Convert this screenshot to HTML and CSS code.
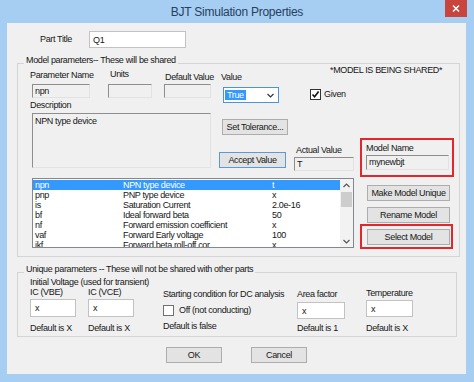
FILE: index.html
```html
<!DOCTYPE html>
<html lang="en">
<head>
    <meta charset="UTF-8">
    <meta name="viewport" content="width=device-width, initial-scale=1.0">
    <title>BJT Simulation Properties</title>
    <link rel="stylesheet" href="styles.css">
</head>
<body>
    <div class="window">
        <div class="titlebar">
            <span></span>
            <div class="title">BJT Simulation Properties</div>
            <button class="close-btn" aria-label="Close">
                <svg width="8" height="7" viewBox="0 0 8 7"><path d="M1 0.5L7 6.5M7 0.5L1 6.5" stroke="#fff" stroke-width="1.5"/></svg>
            </button>
        </div>

        <div class="client">
            <div class="part-row">
                <span class="part-label">Part Title</span>
                <input class="txt part-input" type="text" value="Q1">
            </div>

            <fieldset class="group model-group">
                <legend>Model parameters-- These will be shared</legend>

                <div class="row-top">
                    <div class="fld f-name">
                        <span class="lbl">Parameter Name</span>
                        <div class="ro">npn</div>
                    </div>
                    <div class="fld f-units">
                        <span class="lbl">Units</span>
                        <div class="ro"></div>
                    </div>
                    <div class="fld f-default">
                        <span class="lbl">Default Value</span>
                        <div class="ro"></div>
                    </div>
                    <div class="fld f-value">
                        <span class="lbl">Value</span>
                        <div class="dropdown">
                            <span class="sel">True</span>
                            <svg class="chev" width="7" height="5" viewBox="0 0 7 5"><path d="M0.5 1L3.5 4L6.5 1" fill="none" stroke="#333" stroke-width="1.2"/></svg>
                        </div>
                    </div>
                    <div class="shared-col">
                        <div class="shared-text">*MODEL IS BEING SHARED*</div>
                        <div class="check-row">
                            <span class="check checked">
                                <svg width="9" height="9" viewBox="0 0 9 9"><path d="M1.5 4.5L3.6 6.8L7.6 1.6" fill="none" stroke="#111" stroke-width="1.6"/></svg>
                            </span>
                            <span>Given</span>
                        </div>
                    </div>
                </div>

                <div class="row-mid">
                    <div class="desc-col">
                        <span class="lbl">Description</span>
                        <div class="ro desc-box">NPN type device</div>
                    </div>
                    <div class="btn-col">
                        <button class="btn btn-tol">Set Tolerance...</button>
                        <button class="btn btn-accept">Accept Value</button>
                    </div>
                    <div class="actual-col">
                        <span class="lbl">Actual Value</span>
                        <div class="ro">T</div>
                    </div>
                    <div class="model-box">
                        <span class="lbl">Model Name</span>
                        <div class="ro model-input">mynewbjt</div>
                    </div>
                </div>

                <div class="row-list">
                    <div class="list">
                        <div class="list-rows">
                            <div class="list-row selected"><span>npn</span><span>NPN type device</span><span>t</span></div>
                            <div class="list-row"><span>pnp</span><span>PNP type device</span><span>x</span></div>
                            <div class="list-row"><span>is</span><span>Saturation Current</span><span>2.0e-16</span></div>
                            <div class="list-row"><span>bf</span><span>Ideal forward beta</span><span>50</span></div>
                            <div class="list-row"><span>nf</span><span>Forward emission coefficient</span><span>x</span></div>
                            <div class="list-row"><span>vaf</span><span>Forward Early voltage</span><span>100</span></div>
                            <div class="list-row"><span>ikf</span><span>Forward beta roll-off cor</span><span>x</span></div>
                        </div>
                        <div class="scrollbar">
                            <div class="sb-arrow">
                                <svg width="7" height="5" viewBox="0 0 7 5"><path d="M0.5 4L3.5 1L6.5 4" fill="none" stroke="#555" stroke-width="1.2"/></svg>
                            </div>
                            <div class="sb-thumb"></div>
                            <div class="sb-track"></div>
                            <div class="sb-arrow">
                                <svg width="7" height="5" viewBox="0 0 7 5"><path d="M0.5 1L3.5 4L6.5 1" fill="none" stroke="#555" stroke-width="1.2"/></svg>
                            </div>
                        </div>
                    </div>
                    <div class="side-col">
                        <button class="btn side-btn btn-make">Make Model Unique</button>
                        <button class="btn side-btn btn-rename">Rename Model</button>
                        <div class="select-box">
                            <button class="btn side-btn">Select Model</button>
                        </div>
                    </div>
                </div>
            </fieldset>

            <fieldset class="group unique-group">
                <legend>Unique parameters -- These will not be shared with other parts</legend>

                <div class="row-unique">
                    <div class="u-col u-ic">
                        <div class="u-head">Initial Voltage (used for transient)</div>
                        <div class="ic-row">
                            <div class="ic-fld">
                                <span class="lbl">IC (VBE)</span>
                                <input class="txt ic-input" type="text" value="x">
                                <span class="def">Default is X</span>
                            </div>
                            <div class="ic-fld">
                                <span class="lbl">IC (VCE)</span>
                                <input class="txt ic-input" type="text" value="x">
                                <span class="def">Default is X</span>
                            </div>
                        </div>
                    </div>
                    <div class="u-col u-start">
                        <span class="lbl">Starting condition for DC analysis</span>
                        <div class="check-row off-row">
                            <span class="check"></span>
                            <span>Off (not conducting)</span>
                        </div>
                        <span class="def">Default is false</span>
                    </div>
                    <div class="u-col u-area">
                        <span class="lbl">Area factor</span>
                        <input class="txt u-input" type="text" value="x">
                        <span class="def">Default is 1</span>
                    </div>
                    <div class="u-col u-temp">
                        <span class="lbl">Temperature</span>
                        <input class="txt u-input" type="text" value="x">
                        <span class="def">Default is X</span>
                    </div>
                </div>
            </fieldset>

            <div class="dialog-buttons">
                <button class="btn dlg-btn">OK</button>
                <button class="btn dlg-btn">Cancel</button>
            </div>
        </div>
    </div>
</body>
</html>
```

FILE: styles.css
```css
* {
    box-sizing: border-box;
}
html, body {
    margin: 0;
}
body {
    background: #a5cef2;
    font-family: 'Liberation Sans', Arial, sans-serif;
    font-size: 9px;
    letter-spacing: -0.35px;
    line-height: 11px;
    color: #161616;
}
.window {
    width: 474px;
    height: 382px;
    display: flex;
    flex-direction: column;
}

/* title bar */
.titlebar {
    height: 23px;
    display: grid;
    grid-template-columns: 1fr auto 1fr;
}
.title {
    font-size: 12px;
    letter-spacing: -0.25px;
    line-height: 24px;
    color: #27405e;
}
.close-btn {
    justify-self: end;
    width: 22px;
    height: 17px;
    margin-right: 7px;
    padding: 0;
    border: 0;
    background: #c8443d;
    display: flex;
    align-items: center;
    justify-content: center;
}

/* client area */
.client {
    margin: 0 8px 0 7px;
    height: 351px;
    background: #f0f0f0;
    display: flex;
    flex-direction: column;
}
.part-row {
    display: flex;
    align-items: center;
    height: 17px;
    margin: 8px 0 0 33px;
}
.part-label {
    width: 49px;
}
.txt {
    font: inherit;
    letter-spacing: inherit;
    color: inherit;
    background: #fff;
    border: 1px solid #c2c2c2;
    padding: 0 3px;
    margin: 0;
    outline: none;
}
.part-input {
    width: 97px;
    height: 17px;
}
.ro {
    height: 14px;
    background: #f0f0f0;
    border: 1px solid;
    border-color: #8e8e8e #e2e2e2 #e2e2e2 #8e8e8e;
    padding: 0 2px;
    line-height: 12px;
}

/* group boxes */
.group {
    margin: 0;
    padding: 0;
    min-width: 0;
    border: 1px solid #d4d4d4;
}
.group legend {
    margin-left: 6px;
    padding: 0 2px 5px;
    line-height: 13px;
}
.model-group {
    width: 443px;
    margin: 6px 0 0 10px;
    padding-bottom: 7px;
}
.fld {
    display: flex;
    flex-direction: column;
}
.f-name {
    width: 58px;
    margin-left: 14px;
    padding-top: 5px;
}
.f-name .lbl {
    margin: 0 0 3px -2px;
    white-space: nowrap;
}
.f-units {
    width: 44px;
    margin-left: 18px;
    padding-top: 4px;
}
.f-units .lbl {
    margin: 0 0 4px 2px;
}
.f-default {
    width: 47px;
    margin-left: 12px;
    padding-top: 7px;
}
.f-default .lbl {
    margin: 0 0 1px 1px;
    white-space: nowrap;
}
.f-value {
    width: 58px;
    margin-left: 10px;
    padding-top: 7px;
}

.row-top {
    display: flex;
    align-items: flex-start;
    height: 38px;
    margin-top: -7px;
}
.dropdown {
    width: 56px;
    height: 16px;
    margin: 4px 0 0 2px;
    background: #fff;
    border: 1px solid #4d93da;
    display: flex;
    align-items: center;
    padding: 0 4px 0 1px;
}
.dropdown .sel {
    background: #3399ff;
    color: #fff;
    padding: 0 2px;
    line-height: 10px;
}
.dropdown .chev {
    margin-left: auto;
}
.shared-col {
    margin-left: 31px;
}
.shared-text {
    margin-left: 20px;
    white-space: nowrap;
}
.check-row {
    display: flex;
    align-items: center;
    gap: 3px;
    margin-top: 13px;
}
.check {
    width: 11px;
    height: 11px;
    background: #fff;
    border: 1px solid #707070;
    display: flex;
    align-items: center;
    justify-content: center;
}
.check.checked {
    border-color: #333;
}

.row-mid {
    display: flex;
    align-items: flex-start;
    margin-top: -3px;
}
.desc-col {
    width: 179px;
    margin-left: 14px;
    display: flex;
    flex-direction: column;
}
.desc-col .lbl {
    margin: 0 0 2px -2px;
}
.desc-box {
    height: 55px;
    padding-top: 1px;
}
.btn {
    font: inherit;
    letter-spacing: inherit;
    color: #161616;
    background: #e3e3e3;
    border: 1px solid #adadad;
    padding: 0;
    margin: 0;
    height: 16px;
    line-height: 14px;
    text-align: center;
}
.btn-col {
    width: 71px;
    margin-left: 8px;
    display: flex;
    flex-direction: column;
    align-items: flex-start;
}
.btn-tol {
    width: 66px;
    margin: 19px 0 0 3px;
}
.btn-accept {
    width: 67px;
    margin-top: 17px;
    border-color: #5b9ad6;
}
.actual-col {
    width: 60px;
    margin: 45px 0 0 4px;
    display: flex;
    flex-direction: column;
}
.actual-col .lbl {
    margin: 0 0 1px 2px;
}
.actual-col .ro {
    height: 14px;
}
.model-box {
    width: 94px;
    height: 39px;
    margin: 38px 0 0 6px;
    border: 2px solid #e2262b;
    padding: 3px 0 0 4px;
    display: flex;
    flex-direction: column;
}
.model-box .lbl {
    margin-bottom: 1px;
}
.model-input {
    width: 83px;
    height: 15px;
}

/* parameter list */
.row-list {
    display: flex;
    align-items: flex-start;
    margin-top: 1px;
}
.list {
    width: 322px;
    height: 70px;
    margin-left: 14px;
    background: #fff;
    border: 1px solid #828790;
    display: flex;
}
.list-rows {
    flex: 1;
    padding-top: 1px;
    overflow: hidden;
}
.list-row {
    display: grid;
    grid-template-columns: 90px 149px 1fr;
    height: 10px;
    line-height: 10px;
    white-space: nowrap;
}
.list-row span:first-child {
    padding-left: 2px;
}
.list-row.selected {
    background: #3399ff;
    color: #fff;
}
.scrollbar {
    width: 13px;
    background: #f2f2f2;
    display: flex;
    flex-direction: column;
}
.sb-arrow {
    height: 12px;
    display: flex;
    align-items: center;
    justify-content: center;
}
.sb-thumb {
    height: 15px;
    margin: 1px 1px 0;
    background: #cdcdcd;
}
.sb-track {
    flex: 1;
}
.side-col {
    width: 94px;
    margin-left: 6px;
    display: flex;
    flex-direction: column;
}
.side-btn {
    width: 83px;
}
.btn-make {
    margin: 7px 0 0 7px;
}
.btn-rename {
    margin: 6px 0 0 7px;
}
.select-box {
    width: 93px;
    margin-top: 1px;
    border: 2px solid #e2262b;
    padding: 3px 0 2px 5px;
}

/* unique parameters */
.unique-group {
    width: 440px;
    margin: 6px 0 0 10px;
    padding-bottom: 2px;
}
.row-unique {
    display: flex;
    align-items: flex-start;
    margin-top: -4px;
}
.u-col {
    display: flex;
    flex-direction: column;
    align-items: flex-start;
}
.u-col .lbl,
.u-head {
    line-height: 10px;
    white-space: nowrap;
}
.u-ic {
    width: 133px;
    margin-left: 12px;
}
.ic-row {
    display: flex;
    gap: 12px;
}
.ic-fld {
    width: 46px;
    display: flex;
    flex-direction: column;
}
.ic-input {
    width: 46px;
    height: 18px;
    margin-top: 2px;
    padding: 0 4px;
}
.def {
    margin-top: 6px;
    white-space: nowrap;
}
.u-start {
    width: 134px;
    padding-top: 12px;
}
.off-row {
    margin-top: 6px;
    gap: 5px;
}
.u-start .def {
    margin-top: 5px;
}
.u-area {
    width: 69px;
    padding-top: 12px;
}
.u-input {
    width: 48px;
    height: 17px;
    margin-top: 3px;
    padding: 0 4px;
}
.u-area .def {
    margin-top: 4px;
}
.u-temp {
    padding-top: 11px;
}
.u-temp .u-input {
    width: 47px;
    margin-top: 2px;
}

.dialog-buttons {
    display: flex;
    justify-content: center;
    gap: 29px;
    margin-top: 10px;
}
.dlg-btn {
    width: 56px;
}
```
